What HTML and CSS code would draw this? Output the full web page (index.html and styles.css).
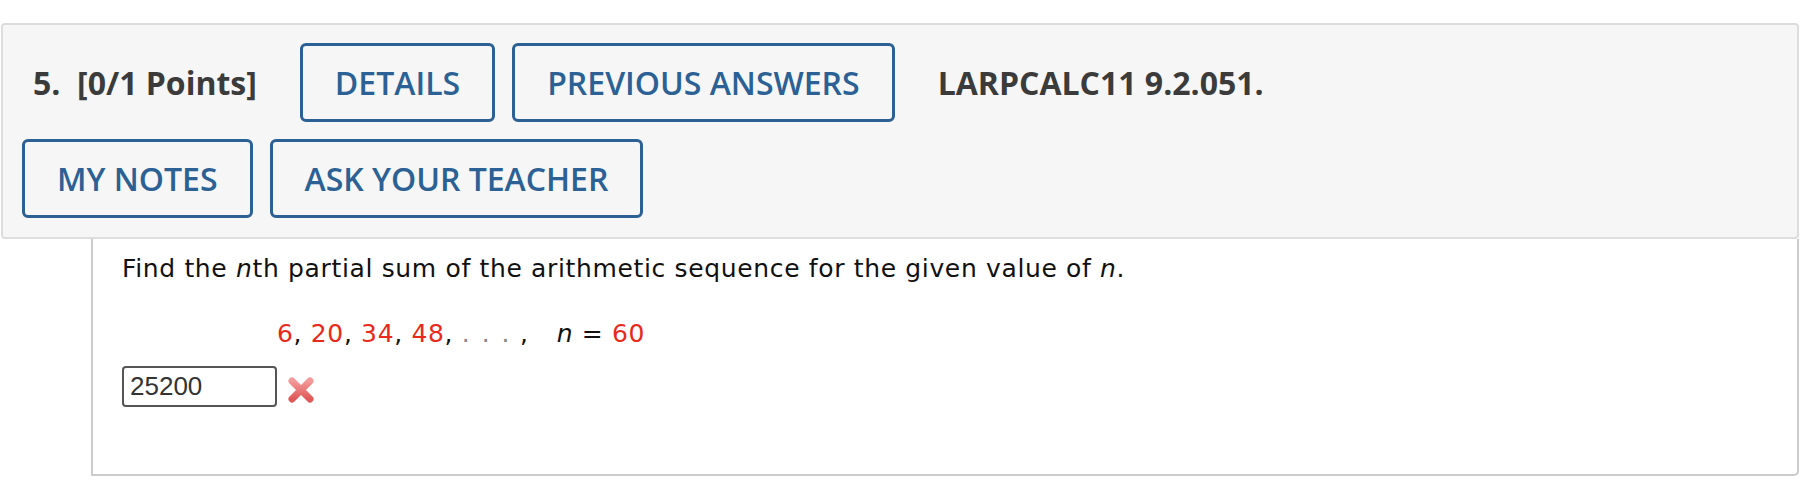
FILE: index.html
```html
<!DOCTYPE html>
<html>
<head>
<meta charset="utf-8">
<link rel="stylesheet" href="styles.css">
</head>
<body>
<div class="page">
  <div class="q-header">
    <div class="q-row">
      <span class="q-title">5.&nbsp; [0/1 Points]</span>
      <button class="q-btn">DETAILS</button>
      <button class="q-btn">PREVIOUS ANSWERS</button>
      <span class="q-code">LARPCALC11 9.2.051.</span>
    </div>
    <div class="q-row">
      <button class="q-btn">MY NOTES</button>
      <button class="q-btn">ASK YOUR TEACHER</button>
    </div>
  </div>
  <div class="q-body">
    <p class="q-text">Find the <i>n</i>th partial sum of the arithmetic sequence for the given value of <i>n</i>.</p>
    <p class="q-seq"><span class="red">6</span>, <span class="red">20</span>, <span class="red">34</span>, <span class="red">48</span>, <span class="dots">. . .</span> ,<span class="n-eq"><i>n</i> = <span class="red">60</span></span></p>
    <div class="answer">
      <div class="ans-box">25200</div>
      <svg class="wrong" width="28" height="26" viewBox="0 0 28 26" aria-hidden="true">
        <defs>
          <linearGradient id="xg" x1="0" y1="0" x2="0" y2="1">
            <stop offset="0" stop-color="#f39a9a"/>
            <stop offset="1" stop-color="#e05858"/>
          </linearGradient>
        </defs>
        <path d="M5 4 L23 22 M23 4 L5 22" stroke="url(#xg)" stroke-width="7" stroke-linecap="round"/>
      </svg>
    </div>
  </div>
</div>
</body>
</html>
```
FILE: styles.css
```css
html, body {
  margin: 0;
  padding: 0;
  background: #ffffff;
}

.page {
  padding: 23px 21px 0 1px;
}

.q-header {
  background: #f6f6f6;
  border: 2px solid #dddddd;
  border-radius: 4px;
  padding: 18px 19px 19px 19px;
  display: flex;
  flex-direction: column;
  gap: 17px;
}

.q-row {
  display: flex;
  align-items: center;
  gap: 17px;
}

.q-title {
  font-family: "Open Sans", sans-serif;
  font-weight: 700;
  font-size: 32px;
  color: #3b3b3b;
  margin-left: 11px;
  margin-right: 26px;
  white-space: pre;
}

.q-code {
  font-family: "Open Sans", sans-serif;
  font-weight: 700;
  font-size: 32px;
  color: #3b3b3b;
  margin-left: 26px;
}

.q-btn {
  font-family: "Open Sans", sans-serif;
  font-weight: 600;
  font-size: 32px;
  color: #2b6194;
  background: transparent;
  border: 3px solid #2b6194;
  border-radius: 6px;
  height: 79px;
  padding: 0 32px;
  margin: 0;
  display: inline-flex;
  align-items: center;
  box-sizing: border-box;
  line-height: 1;
}

.q-body {
  margin-left: 90px;
  border: 2px solid #cccccc;
  border-top: none;
  border-radius: 0 0 5px 0;
  padding: 12px 29px 67px 29px;
  font-family: "DejaVu Sans", Verdana, sans-serif;
  font-size: 25px;
  letter-spacing: 0.65px;
  line-height: 36px;
  color: #111111;
}

.q-text {
  margin: 0;
}

.q-seq {
  margin: 29px 0 0 155px;
}

.red {
  color: #e8291c;
}

.dots {
  color: #888888;
  letter-spacing: 2px;
}

.n-eq {
  margin-left: 28px;
}

.answer {
  margin-top: 14px;
  display: flex;
  align-items: center;
  gap: 10px;
}

.ans-box {
  width: 155px;
  height: 41px;
  box-sizing: border-box;
  border: 2px solid #555555;
  border-radius: 4px;
  font-family: "Liberation Sans", Arial, sans-serif;
  font-size: 26px;
  letter-spacing: 0;
  line-height: 37px;
  color: #333333;
  padding-left: 6px;
  background: #ffffff;
}

.wrong {
  display: block;
  margin-top: 6px;
}
```
